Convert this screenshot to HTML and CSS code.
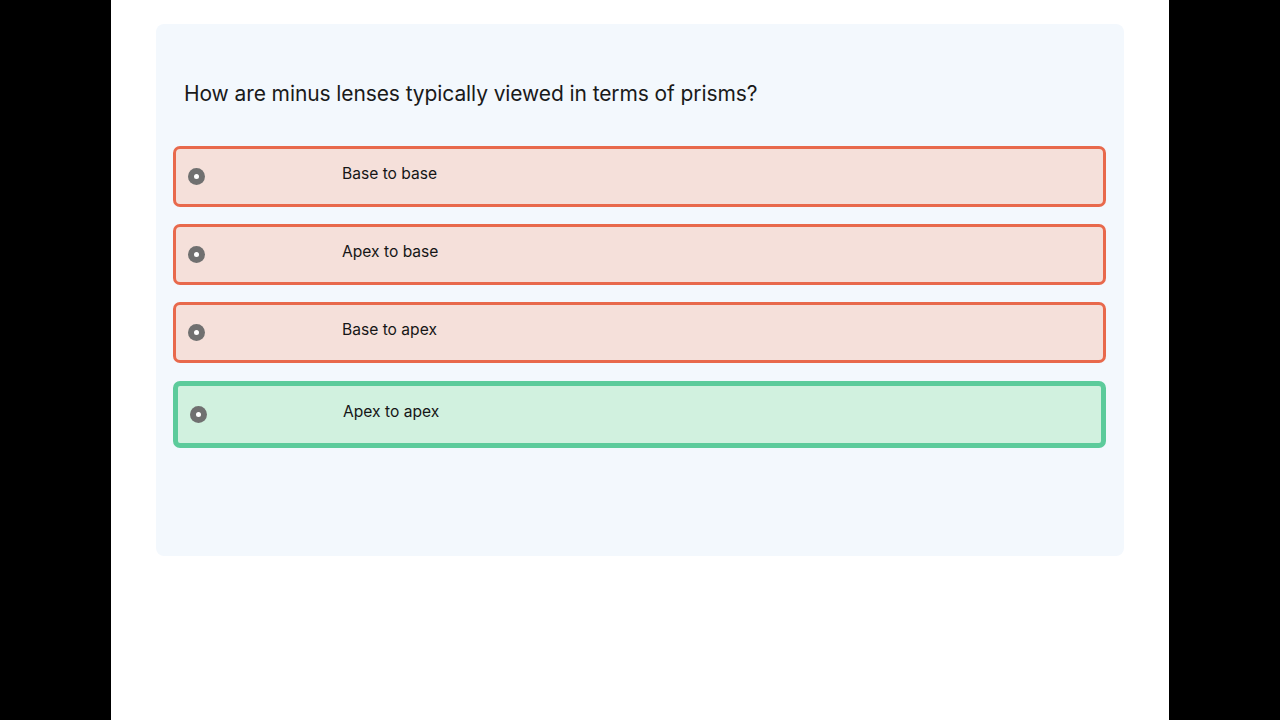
FILE: index.html
```html
<!DOCTYPE html>
<html lang="en">
<head>
<meta charset="utf-8">
<title>Quiz</title>
<link rel="stylesheet" href="styles.css">
</head>
<body>
<div class="page">
  <div class="card">
    <h1 class="question">How are minus lenses typically viewed in terms of prisms?</h1>
    <div class="options">
      <div class="option wrong"><span class="radio"></span><span class="label">Base to base</span></div>
      <div class="option wrong"><span class="radio"></span><span class="label">Apex to base</span></div>
      <div class="option wrong"><span class="radio"></span><span class="label">Base to apex</span></div>
      <div class="option right"><span class="radio"></span><span class="label">Apex to apex</span></div>
    </div>
  </div>
</div>
</body>
</html>
```
FILE: styles.css
```css
html, body {
  margin: 0;
  padding: 0;
  background: #000;
  height: 720px;
  overflow: hidden;
}
.page {
  width: 1058px;
  height: 720px;
  margin: 0 auto;
  background: #fff;
  padding-top: 24px;
  box-sizing: border-box;
  font-family: Inter, "Noto Sans", sans-serif;
}
.card {
  margin-left: 45px;
  width: 968px;
  height: 532px;
  background: #f3f8fd;
  border-radius: 8px;
  box-sizing: border-box;
  padding: 55px 18px 0 17px;
}
.question {
  margin: 0 0 37px 11px;
  font-size: 21px;
  font-weight: 400;
  line-height: 30px;
  color: #1a1a1a;
  letter-spacing: -0.1px;
}
.options {
  display: flex;
  flex-direction: column;
  gap: 17px;
  width: 933px;
}
.option {
  display: flex;
  align-items: center;
  box-sizing: border-box;
  height: 61px;
  border: 3px solid #e8694c;
  background: #f5e0da;
  border-radius: 7px;
  padding-left: 12px;
}
.option.right {
  height: 67px;
  border: 5px solid #5ccb9b;
  background: #d1f1df;
  margin-top: 1px;
}
.radio {
  width: 17px;
  height: 17px;
  border-radius: 50%;
  background: #707070;
  position: relative;
  flex: none;
}
.radio::after {
  content: "";
  position: absolute;
  left: 6px;
  top: 6px;
  width: 5px;
  height: 5px;
  border-radius: 50%;
  background: #fff;
}
.label {
  margin-left: 137px;
  margin-bottom: 7px;
  font-size: 15.6px;
  color: #161616;
}
.option.right .label {
  margin-left: 136px;
}
```
